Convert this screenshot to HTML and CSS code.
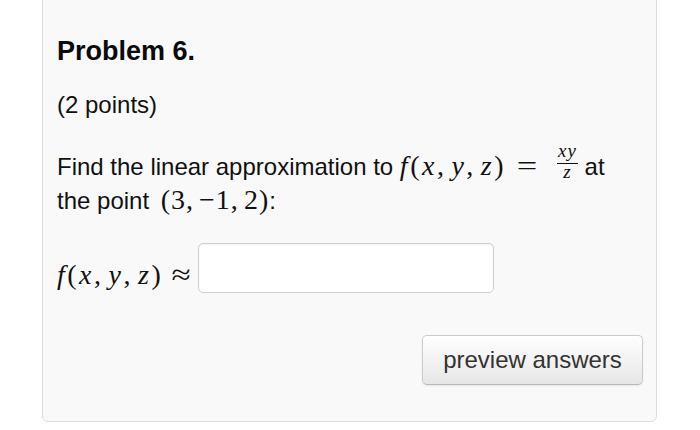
FILE: index.html
```html
<!DOCTYPE html>
<html>
<head>
<meta charset="utf-8">
<link rel="stylesheet" href="styles.css">
</head>
<body>
<div class="panel">
  <h1 class="title">Problem 6.</h1>
  <p class="points">(2 points)</p>
  <p class="question">Find the linear approximation to <span class="m v"><i>f</i>(<i>x</i>,<span class="th"></span><i>y</i>,<span class="th"></span><i>z</i>)<span class="rel">=</span></span><span class="frac"><span class="num"><i>xy</i></span><span class="bar"></span><span class="den"><i>z</i></span></span> at the point <span class="m n">(3,<span class="th"></span>−1,<span class="th"></span>2)</span>:</p>
  <div class="answer">
    <span class="m v lhs"><i>f</i>(<i>x</i>,<span class="th"></span><i>y</i>,<span class="th"></span><i>z</i>)<span class="rel2">≈</span></span>
    <input class="box" type="text">
  </div>
  <div class="actions">
    <button class="btn" type="button">preview answers</button>
  </div>
</div>
</body>
</html>
```

FILE: styles.css
```css
html, body {
  margin: 0;
  padding: 0;
  background: #ffffff;
}

body {
  font-family: "Liberation Sans", Arial, Helvetica, sans-serif;
  color: #111;
}

.panel {
  box-sizing: border-box;
  width: 615px;
  height: 432px;
  margin: -10px 0 0 42px;
  padding: 44px 13px 0 14px;
  background: #f9f9f9;
  border: 1px solid #dcdcdc;
  border-radius: 0 0 6px 6px;
}

.title {
  margin: 0;
  font-size: 27px;
  line-height: 32px;
  font-weight: bold;
  color: #0a0a0a;
}

.points {
  margin: 21px 0 0;
  font-size: 24px;
  line-height: 34px;
}

.question {
  margin: 28px 0 0;
  padding-right: 30px;
  font-size: 24px;
  line-height: 34px;
}

.m {
  font-family: "Liberation Serif", "Times New Roman", serif;
  font-size: 28px;
  line-height: 27px;
}

.m.v {
  letter-spacing: 2.5px;
}

.m.n {
  letter-spacing: 1px;
  margin-left: 5px;
}

.m i {
  font-style: italic;
}

.th {
  display: inline-block;
  width: 5px;
}

.rel {
  display: inline-block;
  width: 22px;
  margin: 0 8px 0 10px;
  text-align: center;
  letter-spacing: 0;
  transform: scaleX(1.3);
}

.rel2 {
  display: inline-block;
  width: 20px;
  margin: 0 4px 0 11px;
  letter-spacing: 0;
  transform: scaleX(1.25);
}

.frac {
  display: inline-flex;
  flex-direction: column;
  align-items: center;
  vertical-align: 18px;
  margin: -8px 0 0 11px;
  font-family: "Liberation Serif", "Times New Roman", serif;
  font-size: 19px;
}

.num, .den {
  line-height: 14px;
  padding: 0 1px;
  letter-spacing: 1px;
}

.bar {
  align-self: stretch;
  height: 0;
  border-top: 1px solid #111;
  margin-top: 5px;
}

.den {
  margin-top: 1px;
}

.answer {
  display: flex;
  align-items: center;
  margin-top: 25px;
}

.lhs {
  padding-top: 12px;
}

.box {
  box-sizing: border-box;
  width: 296px;
  height: 50px;
  margin: 0;
  background: #ffffff;
  border: 1px solid #cfcfcf;
  border-radius: 5px;
  box-shadow: inset 0 1px 2px rgba(0, 0, 0, 0.06);
}

.actions {
  display: flex;
  justify-content: flex-end;
  margin-top: 42px;
}

.btn {
  box-sizing: border-box;
  width: 221px;
  height: 50px;
  margin: 0;
  padding: 0;
  font-family: "Liberation Sans", Arial, Helvetica, sans-serif;
  font-size: 24px;
  color: #333;
  background: linear-gradient(#ffffff, #e6e6e6);
  border: 1px solid #cccccc;
  border-bottom-color: #b8b8b8;
  border-radius: 5px;
  box-shadow: 0 1px 2px rgba(0, 0, 0, 0.08);
}
```
